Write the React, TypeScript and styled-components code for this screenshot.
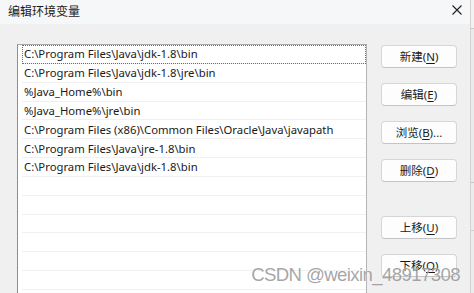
import React from "react";
import styled, { createGlobalStyle } from "styled-components";

const Global = createGlobalStyle`
  html, body { margin: 0; padding: 0; }
  body {
    width: 474px;
    height: 293px;
    overflow: hidden;
    background: #f0f0f0;
    font-family: "Noto Sans", "Noto Sans CJK SC", sans-serif;
  }
`;

const Screen = styled.div`
  position: relative;
  display: flex;
  width: 474px;
  height: 293px;
  overflow: hidden;
`;

const Dialog = styled.div`
  display: flex;
  flex-direction: column;
  width: 471px;
  height: 293px;
  background: #f0f0f0;
  border-right: 1px solid #d2d2d2;
  box-sizing: border-box;
`;

const Backdrop = styled.div`
  flex: 1;
  background: linear-gradient(
    to bottom,
    #f2f2f2 0,
    #f2f2f2 28px,
    #c9c9c9 28px,
    #c9c9c9 29px,
    #ebebeb 29px,
    #ebebeb 182px,
    #c4c4c4 182px,
    #c4c4c4 183px,
    #ececec 183px,
    #ececec 230px,
    #cfcfcf 230px,
    #cfcfcf 231px,
    #ececec 231px
  );
`;

const TitleBar = styled.div`
  display: flex;
  align-items: center;
  justify-content: space-between;
  height: 22px;
  padding: 0 8px 2px 8px;
  background: #f6f7f9;
  flex-shrink: 0;
`;

const Title = styled.span`
  font-family: "Noto Sans CJK SC", sans-serif;
  font-size: 12px;
  color: #1b1b1b;
  line-height: 16px;
`;

const CloseButton = styled.span`
  display: flex;
  width: 10px;
  height: 10px;
  margin-bottom: 2px;
`;

const Body = styled.div`
  display: flex;
  align-items: flex-start;
  gap: 14px;
  padding: 20px 0 0 17px;
  flex: 1;
  min-height: 0;
`;

const ListBox = styled.div`
  width: 350px;
  height: 260px;
  box-sizing: border-box;
  background: #ffffff;
  border: 1px solid #8c8f94;
  border-top-color: #a8a8a8;
  border-right-color: #b5b5b5;
  padding: 0 0 0 4px;
  flex-shrink: 0;
`;

const Row = styled.div<{ $focused?: boolean }>`
  height: 18.85px;
  box-sizing: border-box;
  display: flex;
  align-items: center;
  padding-left: 2px;
  font-size: 11.3px;
  color: #1a1a1a;
  white-space: nowrap;
  border-bottom: 1px solid #f0f0f0;
  outline: ${(p) => (p.$focused ? "1px dotted #6e6e6e" : "none")};
  outline-offset: -1px;
`;

const ButtonColumn = styled.div`
  display: flex;
  flex-direction: column;
  padding-top: 1px;
`;

const Button = styled.div<{ $gapBefore?: number }>`
  width: 76px;
  height: 23px;
  box-sizing: border-box;
  margin-top: ${(p) => p.$gapBefore ?? 0}px;
  display: flex;
  align-items: center;
  justify-content: center;
  background: #fdfdfd;
  border: 1px solid #d6d6d6;
  border-bottom-color: #c4c4c4;
  border-radius: 4px;
  font-family: "Noto Sans", "Noto Sans CJK SC", sans-serif;
  font-size: 11.5px;
  color: #1a1a1a;
  line-height: 14px;
  u {
    text-decoration: underline;
    text-underline-offset: 2px;
  }
`;

const Watermark = styled.div`
  position: absolute;
  right: 14px;
  bottom: 7px;
  font-family: "Liberation Sans", Arial, sans-serif;
  font-size: 18.6px;
  letter-spacing: -0.6px;
  color: rgba(140, 140, 140, 0.78);
  text-shadow: 0 0 1px rgba(255, 255, 255, 0.6);
  white-space: nowrap;
`;

const paths = [
  "C:\\Program Files\\Java\\jdk-1.8\\bin",
  "C:\\Program Files\\Java\\jdk-1.8\\jre\\bin",
  "%Java_Home%\\bin",
  "%Java_Home%\\jre\\bin",
  "C:\\Program Files (x86)\\Common Files\\Oracle\\Java\\javapath",
  "C:\\Program Files\\Java\\jre-1.8\\bin",
  "C:\\Program Files\\Java\\jdk-1.8\\bin",
  "",
  "",
  "",
  "",
  "",
  "",
  "",
];

const buttons: { label: string; key: string; rest?: string; gap: number }[] = [
  { label: "新建(", key: "N", rest: ")", gap: 0 },
  { label: "编辑(", key: "E", rest: ")", gap: 15 },
  { label: "浏览(", key: "B", rest: ")...", gap: 15 },
  { label: "删除(", key: "D", rest: ")", gap: 15 },
  { label: "上移(", key: "U", rest: ")", gap: 34 },
  { label: "下移(", key: "O", rest: ")", gap: 15 },
];

export default function App() {
  return (
    <>
      <Global />
      <Screen>
        <Dialog>
          <TitleBar>
            <Title>编辑环境变量</Title>
            <CloseButton>
              <svg width="10" height="10" viewBox="0 0 10 10">
                <path d="M0.5 0.5 L9.5 9.5 M9.5 0.5 L0.5 9.5" stroke="#1f1f1f" strokeWidth="1.1" />
              </svg>
            </CloseButton>
          </TitleBar>
          <Body>
            <ListBox>
              {paths.map((p, i) => (
                <Row key={i} $focused={i === 0}>
                  {p}
                </Row>
              ))}
            </ListBox>
            <ButtonColumn>
              {buttons.map((b) => (
                <Button key={b.key} $gapBefore={b.gap}>
                  {b.label}
                  <u>{b.key}</u>
                  {b.rest}
                </Button>
              ))}
            </ButtonColumn>
          </Body>
        </Dialog>
        <Backdrop />
        <Watermark>CSDN @weixin_48917308</Watermark>
      </Screen>
    </>
  );
}
